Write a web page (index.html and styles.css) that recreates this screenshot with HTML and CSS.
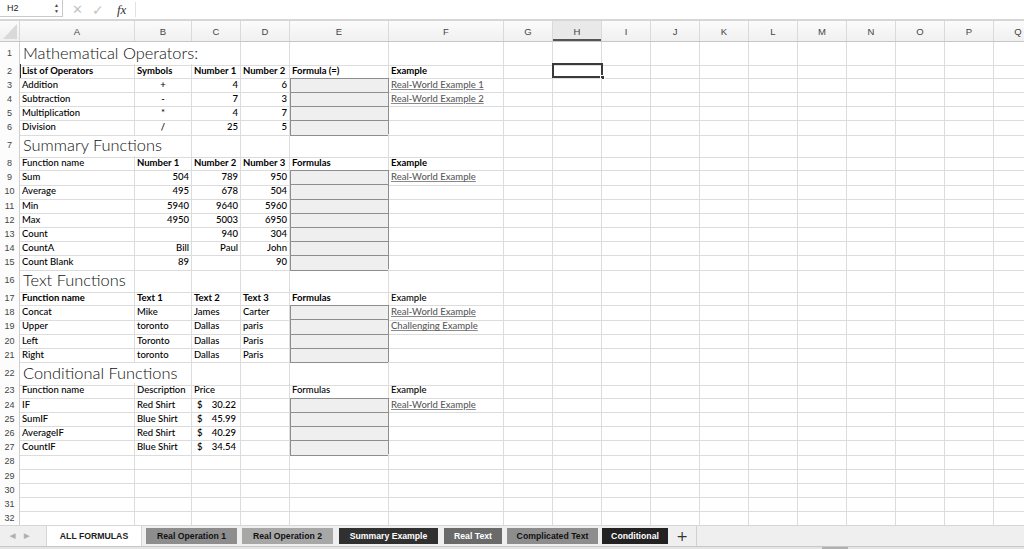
FILE: index.html
```html
<!DOCTYPE html>
<html>
<head>
<meta charset="utf-8">
<link rel="stylesheet" href="styles.css">
</head>
<body>
<div class="app">
  <div class="fbar">
    <div class="namebox"><span>H2</span><span class="spin"><span>&#9650;</span><span>&#9660;</span></span></div>
    <div class="fbtns"><span class="x">&#10005;</span><span class="ck">&#10003;</span><span class="fx">fx</span></div>
    <div class="finput"></div>
  </div>
  <div class="sheet">
    <div class="hdr"><span class="corner"></span><span>A</span><span>B</span><span>C</span><span>D</span><span>E</span><span>F</span><span>G</span><span class="on">H</span><span>I</span><span>J</span><span>K</span><span>L</span><span>M</span><span>N</span><span>O</span><span>P</span><span>Q</span></div>

    <div class="r t"><span class="n">1</span><span class="ttl s3">Mathematical Operators:</span><span></span><span></span><span></span><span class="g"></span></div>
    <div class="r hb"><span class="n">2</span><span class="lb">List of Operators</span><span>Symbols</span><span>Number 1</span><span>Number 2</span><span>Formula (=)</span><span>Example</span><span class="g"><span class="sel"><span class="hdl"></span></span></span></div>
    <div class="r"><span class="n">3</span><span>Addition</span><span class="c">+</span><span class="rt">4</span><span class="rt">6</span><span class="bx"></span><span><a>Real-World Example 1</a></span><span class="g"></span></div>
    <div class="r"><span class="n">4</span><span>Subtraction</span><span class="c">-</span><span class="rt">7</span><span class="rt">3</span><span class="bx"></span><span><a>Real-World Example 2</a></span><span class="g"></span></div>
    <div class="r"><span class="n">5</span><span>Multiplication</span><span class="c">*</span><span class="rt">4</span><span class="rt">7</span><span class="bx"></span><span></span><span class="g"></span></div>
    <div class="r"><span class="n">6</span><span>Division</span><span class="c">/</span><span class="rt">25</span><span class="rt">5</span><span class="bx"></span><span></span><span class="g"></span></div>

    <div class="r t"><span class="n">7</span><span class="ttl s2">Summary Functions</span><span></span><span></span><span></span><span></span><span class="g"></span></div>
    <div class="r"><span class="n">8</span><span>Function name</span><span class="b">Number 1</span><span class="b">Number 2</span><span class="b">Number 3</span><span class="b">Formulas</span><span class="b">Example</span><span class="g"></span></div>
    <div class="r"><span class="n">9</span><span>Sum</span><span class="rt">504</span><span class="rt">789</span><span class="rt">950</span><span class="bx"></span><span><a>Real-World Example</a></span><span class="g"></span></div>
    <div class="r"><span class="n">10</span><span>Average</span><span class="rt">495</span><span class="rt">678</span><span class="rt">504</span><span class="bx"></span><span></span><span class="g"></span></div>
    <div class="r"><span class="n">11</span><span>Min</span><span class="rt">5940</span><span class="rt">9640</span><span class="rt">5960</span><span class="bx"></span><span></span><span class="g"></span></div>
    <div class="r"><span class="n">12</span><span>Max</span><span class="rt">4950</span><span class="rt">5003</span><span class="rt">6950</span><span class="bx"></span><span></span><span class="g"></span></div>
    <div class="r"><span class="n">13</span><span>Count</span><span class="rt"></span><span class="rt">940</span><span class="rt">304</span><span class="bx"></span><span></span><span class="g"></span></div>
    <div class="r"><span class="n">14</span><span>CountA</span><span class="rt">Bill</span><span class="rt">Paul</span><span class="rt">John</span><span class="bx"></span><span></span><span class="g"></span></div>
    <div class="r"><span class="n">15</span><span>Count Blank</span><span class="rt">89</span><span class="rt"></span><span class="rt">90</span><span class="bx"></span><span></span><span class="g"></span></div>

    <div class="r t"><span class="n">16</span><span class="ttl">Text Functions</span><span></span><span></span><span></span><span></span><span></span><span class="g"></span></div>
    <div class="r hb"><span class="n">17</span><span>Function name</span><span>Text 1</span><span>Text 2</span><span>Text 3</span><span>Formulas</span><span class="nb">Example</span><span class="g"></span></div>
    <div class="r"><span class="n">18</span><span>Concat</span><span>Mike</span><span>James</span><span>Carter</span><span class="bx"></span><span><a>Real-World Example</a></span><span class="g"></span></div>
    <div class="r"><span class="n">19</span><span>Upper</span><span>toronto</span><span>Dallas</span><span>paris</span><span class="bx"></span><span><a>Challenging Example</a></span><span class="g"></span></div>
    <div class="r"><span class="n">20</span><span>Left</span><span>Toronto</span><span>Dallas</span><span>Paris</span><span class="bx"></span><span></span><span class="g"></span></div>
    <div class="r"><span class="n">21</span><span>Right</span><span>toronto</span><span>Dallas</span><span>Paris</span><span class="bx"></span><span></span><span class="g"></span></div>

    <div class="r t"><span class="n">22</span><span class="ttl s2">Conditional Functions</span><span></span><span></span><span></span><span></span><span class="g"></span></div>
    <div class="r"><span class="n">23</span><span>Function name</span><span>Description</span><span>Price</span><span></span><span>Formulas</span><span>Example</span><span class="g"></span></div>
    <div class="r"><span class="n">24</span><span>IF</span><span>Red Shirt</span><span class="acc"><span>$</span><span>30.22</span></span><span></span><span class="bx"></span><span><a>Real-World Example</a></span><span class="g"></span></div>
    <div class="r"><span class="n">25</span><span>SumIF</span><span>Blue Shirt</span><span class="acc"><span>$</span><span>45.99</span></span><span></span><span class="bx"></span><span></span><span class="g"></span></div>
    <div class="r"><span class="n">26</span><span>AverageIF</span><span>Red Shirt</span><span class="acc"><span>$</span><span>40.29</span></span><span></span><span class="bx"></span><span></span><span class="g"></span></div>
    <div class="r"><span class="n">27</span><span>CountIF</span><span>Blue Shirt</span><span class="acc"><span>$</span><span>34.54</span></span><span></span><span class="bx"></span><span></span><span class="g"></span></div>
    <div class="r"><span class="n">28</span><span></span><span></span><span></span><span></span><span></span><span></span><span class="g"></span></div>
    <div class="r"><span class="n">29</span><span></span><span></span><span></span><span></span><span></span><span></span><span class="g"></span></div>
    <div class="r"><span class="n">30</span><span></span><span></span><span></span><span></span><span></span><span></span><span class="g"></span></div>
    <div class="r"><span class="n">31</span><span></span><span></span><span></span><span></span><span></span><span></span><span class="g"></span></div>
    <div class="r"><span class="n">32</span><span></span><span></span><span></span><span></span><span></span><span></span><span class="g"></span></div>
  </div>
  <div class="tabs">
    <div class="nav"><span>&#9664;</span><span>&#9654;</span></div>
    <div class="tab active w1">ALL FORMULAS</div>
    <div class="tab w2 gm">Real Operation 1</div>
    <div class="tab w3 gl">Real Operation 2</div>
    <div class="tab w4 gd">Summary Example</div>
    <div class="tab w5 gx">Real Text</div>
    <div class="tab w6 gm">Complicated Text</div>
    <div class="tab w7 gk">Conditional</div>
    <div class="plus">+</div>
  </div>
  <div class="scroll"><div class="thumb"></div></div>
</div>
</body>
</html>
```
FILE: styles.css
```css
* { box-sizing: border-box; }
html, body { margin: 0; padding: 0; }
body {
  width: 1024px; height: 549px; overflow: hidden; background: #fff;
  font-family: Lato, "Liberation Sans", sans-serif; color: #111;
}
.app { display: flex; flex-direction: column; height: 549px; }

/* formula bar */
.fbar { flex: none; height: 21px; display: flex; border-bottom: 2px solid #d6d6d6; background: #fff; }
.namebox {
  width: 63px; height: 17px; border-right: 1px solid #c9c9c9; border-bottom: 1px solid #c9c9c9;
  display: flex; align-items: center; justify-content: space-between; padding: 0 3px 0 7px;
  font: 9px "Liberation Sans", sans-serif; color: #222;
}
.spin { display: flex; flex-direction: column; font-size: 5px; line-height: 6px; color: #444; }
.fbtns { width: 73px; display: flex; align-items: center; padding-left: 9px; border-right: 1px solid #e2e2e2; margin: 2px 0; }
.x { color: #c4c4c4; font: 13px "DejaVu Sans", sans-serif; width: 20px; }
.ck { color: #c4c4c4; font: 14px "DejaVu Sans", sans-serif; width: 25px; }
.fx { font: italic 13px "Liberation Serif", serif; color: #333; }
.finput { flex: 1; }

/* sheet */
.sheet { flex: 1; overflow: hidden; }
.hdr, .r {
  display: grid;
  grid-template-columns: 20px 115px 57px 49px 49px 99px 115px repeat(11, 49px);
}
.hdr { height: 21px; background: linear-gradient(#fbfbfb, #f0f0f0); border-bottom: 1px solid #c6c6c6; }
.hdr > span {
  border-right: 1px solid #dadada; font: 9.5px "Liberation Sans", sans-serif; color: #444;
  display: flex; align-items: center; justify-content: center;
}
.hdr > span.on { background: #e9e9e9; box-shadow: inset 0 -2px 0 #555; }
.corner { position: relative; }
.corner::after {
  content: ""; position: absolute; inset: 3px 2px 2px 3px;
  background: #d9d9d9; clip-path: polygon(100% 0, 100% 100%, 0 100%);
}

.r { height: 14.2px; }
.r.t { height: 21.5px; }
.r > span {
  border-right: 1px solid #dcdcdc; border-bottom: 1px solid #dcdcdc;
  font-size: 9.5px; font-weight: 500; line-height: 14.4px; padding: 0 2px; white-space: nowrap; color: #000;
}
.r > span.n {
  background: #fcfcfc; border-right-color: #cfcfcf; text-align: center;
  font: 9px/14.4px "Liberation Sans", sans-serif; color: #444;
}
.r.t > span { line-height: 21px; }
.r.t > span.n { line-height: 23px; }
.ttl { font-size: 16.4px !important; font-weight: 300 !important; color: #111 !important; padding-left: 3px !important; }
.s2 { grid-column: span 2; }
.s3 { grid-column: span 3; }
.hb > span { font-weight: 700; }
.hb > span.nb { font-weight: 500; }
.b { font-weight: 700 !important; }
.lb { box-shadow: inset 1px 0 0 #333; }
.c { text-align: center; }
.rt { text-align: right; }
.acc { display: flex; justify-content: space-between; padding: 0 4px 0 5px !important; }
.r a { color: #5a5a5a; text-decoration: underline; text-decoration-color: #8a8a8a; }
.bx {
  background: #efefef; border-right-color: #8e8e8e !important; border-bottom-color: #8e8e8e !important;
  box-shadow: inset 1px 1px 0 #8e8e8e;
}
.r > span.g {
  grid-column: span 11; border-right: none; padding: 0; position: relative;
  background: repeating-linear-gradient(90deg, transparent 0 48px, #dcdcdc 48px 49px);
}
.sel {
  position: absolute; left: 48px; top: -1px; width: 51px; height: 15.2px;
  border: 2px solid #3a3a3a;
}
.hdl {
  position: absolute; right: -4px; bottom: -4px; width: 5px; height: 5px;
  background: #333; border: 1px solid #fff;
}

/* tabs */
.tabs {
  flex: none; height: 21px; display: flex; align-items: center; background: #efefef;
  border-top: 1px solid #d6d6d6;
  font: bold 8.7px "Liberation Sans", sans-serif;
}
.nav { width: 46px; display: flex; gap: 9px; padding-left: 10px; font-size: 7px; color: #b0b0b0; }
.tab { height: 16px; display: flex; align-items: center; justify-content: center; color: #111; flex: none; }
.tab.active { height: 20px; background: #fff; border-left: 1px solid #d6d6d6; border-right: 1px solid #d6d6d6; color: #222; margin-top: -1px; }
.w1 { width: 96px; margin-right: 4px; }
.w2 { width: 91px; margin-right: 5px; }
.w3 { width: 91px; margin-right: 6px; }
.w4 { width: 99px; margin-right: 6px; }
.w5 { width: 58px; margin-right: 5px; }
.w6 { width: 91px; margin-right: 4px; }
.w7 { width: 66px; }
.gm { background: #8d8d8d; }
.gl { background: #a7a7a7; }
.gd { background: #303030; color: #fff; }
.gx { background: #6a6a6a; color: #fff; }
.gk { background: #222; color: #fff; }
.plus {
  width: 29px; height: 20px; display: flex; align-items: center; justify-content: center;
  font: 14px "DejaVu Sans", sans-serif; color: #333; border-right: 1px solid #d0d0d0;
}
.scroll { flex: none; height: 3px; background: #e4e4e4; border-top: 1px solid #c8c8c8; position: relative; }
.thumb { position: absolute; left: 822px; top: 0; width: 26px; height: 2px; background: #b0b0b0; }
```
